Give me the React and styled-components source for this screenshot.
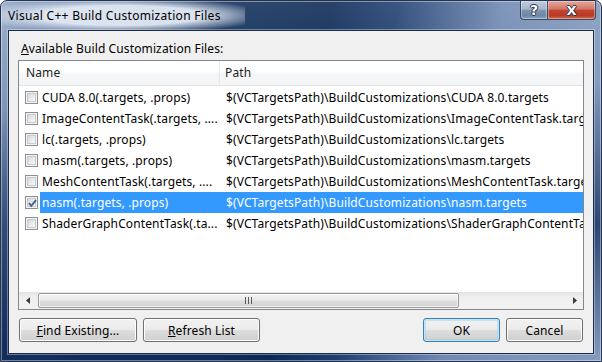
import React from "react";
import styled, { createGlobalStyle } from "styled-components";

const GlobalStyle = createGlobalStyle`
  html, body {
    margin: 0;
    padding: 0;
    background: #ffffff;
  }
  body {
    font-family: "Segoe UI", "Noto Sans", "Liberation Sans", sans-serif;
    font-size: 12px;
    letter-spacing: 0.12px;
  }
`;

const rows = [
  { name: "CUDA 8.0(.targets, .props)", file: "CUDA 8.0.targets" },
  { name: "ImageContentTask(.targets, ....", file: "ImageContentTask.targets" },
  { name: "lc(.targets, .props)", file: "lc.targets" },
  { name: "masm(.targets, .props)", file: "masm.targets" },
  { name: "MeshContentTask(.targets, ....", file: "MeshContentTask.targets" },
  { name: "nasm(.targets, .props)", file: "nasm.targets", checked: true, selected: true },
  { name: "ShaderGraphContentTask(.ta...", file: "ShaderGraphContentTask.targets" },
];

// 창 프레임 (Aero glass)
const Window = styled.div`
  box-sizing: border-box;
  width: 602px;
  height: 362px;
  display: flex;
  flex-direction: column;
  border: 1px solid #22344f;
  border-radius: 7px 7px 0 0;
  overflow: hidden;
  background:
    radial-gradient(ellipse 45% 70% at 0% 100%, rgba(14, 40, 86, 0.95) 0%, rgba(14, 40, 86, 0.6) 55%, rgba(14, 40, 86, 0) 100%),
    radial-gradient(ellipse 30% 40% at 100% 62%, rgba(20, 48, 94, 0.8) 0%, rgba(20, 48, 94, 0) 100%),
    linear-gradient(180deg, rgba(255, 255, 255, 0.12) 0%, rgba(255, 255, 255, 0) 30%),
    linear-gradient(100deg, #93a8c6 0%, #5571a0 10%, #14335f 22%, #0c2956 50%, #1f3f70 60%, #7089b3 76%, #8aa1c3 100%);
  box-shadow: inset 0 0 0 1px rgba(255, 255, 255, 0.4);
`;

const TitleBar = styled.div`
  height: 29px;
  display: flex;
  justify-content: space-between;
  align-items: flex-start;
  flex-shrink: 0;
`;

const TitleText = styled.div`
  margin: 0 0 0 -4px;
  padding: 6px 24px 0 11px;
  height: 23px;
  color: #000;
  font-size: 12px;
  letter-spacing: 0.3px;
  background: radial-gradient(ellipse 60% 62% at 50% 50%, rgba(226, 234, 244, 0.95) 55%, rgba(226, 234, 244, 0) 100%);
`;

const Caption = styled.div`
  display: flex;
  margin-right: 5px;
`;

const CaptionButton = styled.div`
  box-sizing: border-box;
  width: ${(p) => p.$w}px;
  height: 19px;
  display: flex;
  align-items: center;
  justify-content: center;
  border: 1px solid #3b4a63;
  border-top: none;
  border-left-width: ${(p) => (p.$first ? "1px" : "0")};
  border-radius: ${(p) => (p.$first ? "0 0 0 4px" : "0 0 4px 0")};
  background: ${(p) =>
    p.$close
      ? "linear-gradient(180deg, #e3a89d 0%, #d47565 45%, #c3442e 52%, #b83b26 80%, #d86a4c 100%)"
      : "linear-gradient(180deg, #c0cddd 0%, #a5b5cb 45%, #7f93b1 52%, #6f86a8 80%, #8aa2c2 100%)"};
  box-shadow: inset 0 0 0 1px rgba(255, 255, 255, 0.35);
  color: #fff;
  font-family: "DejaVu Sans", sans-serif;
  font-weight: bold;
  font-size: ${(p) => (p.$close ? "13px" : "14px")};
  text-shadow: 0 0 1px #1d2a40, 1px 0 0 #2a3a55, -1px 0 0 #2a3a55, 0 1px 0 #2a3a55, 0 -1px 0 #2a3a55;
`;

const Client = styled.div`
  flex: 1;
  margin: 0 7px 7px 7px;
  display: flex;
  flex-direction: column;
  background: #f0f0f0;
  border: 1px solid #1c2d48;
  box-shadow: 0 0 0 1px rgba(255, 255, 255, 0.35);
`;

const Label = styled.div`
  margin: 10px 0 0 12px;
  height: 16px;
  line-height: 16px;
  color: #000;
`;

const ListBox = styled.div`
  margin: 3px 9px 0 9px;
  height: 250px;
  box-sizing: border-box;
  display: flex;
  flex-direction: column;
  background: #fff;
  border: 1px solid #828790;
  overflow: hidden;
`;

const Header = styled.div`
  height: 24px;
  display: flex;
  flex-shrink: 0;
  border-bottom: 1px solid #e3e4e6;
  background: linear-gradient(180deg, #ffffff 0%, #ffffff 45%, #f6f7f8 50%, #f3f4f6 100%);
`;

const HeaderCell = styled.div`
  box-sizing: border-box;
  width: ${(p) => (p.$w ? `${p.$w}px` : "auto")};
  flex: ${(p) => (p.$w ? "none" : "1")};
  padding-left: ${(p) => p.$pad}px;
  line-height: 24px;
  color: #1e1e1e;
  border-right: ${(p) => (p.$w ? "1px solid #e5e8ec" : "none")};
`;

const Rows = styled.div`
  flex: 1;
  padding-top: 1px;
`;

const Row = styled.div`
  height: 21px;
  display: flex;
  align-items: center;
`;

const CheckSlot = styled.div`
  width: 21px;
  flex-shrink: 0;
  display: flex;
  padding-left: 6px;
  box-sizing: border-box;
`;

const CheckBox = styled.div`
  box-sizing: border-box;
  width: 13px;
  height: 13px;
  border: 1px solid #8f8f8f;
  background: #f4f4f4;
  padding: 1px;
  position: relative;
  span {
    display: block;
    width: 9px;
    height: 9px;
    box-sizing: border-box;
    border: 1px solid #c6c9cd;
    background: linear-gradient(135deg, #d3d6da 0%, #eceded 60%, #fafafa 100%);
  }
  svg {
    position: absolute;
    left: 1px;
    top: 1px;
  }
`;

const RowBody = styled.div`
  flex: 1;
  height: 21px;
  display: flex;
  align-items: center;
  background: ${(p) => (p.$selected ? "#3399ff" : "transparent")};
  color: ${(p) => (p.$selected ? "#fff" : "#000")};
  white-space: nowrap;
  overflow: hidden;
`;

const NameText = styled.div`
  width: 180px;
  flex-shrink: 0;
  padding-left: 2px;
  box-sizing: border-box;
  overflow: hidden;
`;

const PathText = styled.div`
  padding-left: 6px;
  flex: 1;
  overflow: hidden;
`;

const HScroll = styled.div`
  height: 17px;
  flex-shrink: 0;
  display: flex;
  align-items: center;
  background: linear-gradient(180deg, #e3e3e3 0%, #efefef 30%, #f2f2f2 100%);
`;

const Arrow = styled.div`
  width: 17px;
  height: 17px;
  flex-shrink: 0;
  display: flex;
  align-items: center;
  justify-content: center;
`;

const Thumb = styled.div`
  box-sizing: border-box;
  width: 421px;
  height: 15px;
  margin-left: 2px;
  display: flex;
  align-items: center;
  justify-content: center;
  border: 1px solid #9a9a9a;
  border-radius: 2px;
  background: linear-gradient(180deg, #f4f4f4 0%, #e9e9e9 45%, #dcdcdc 55%, #d3d3d3 100%);
  box-shadow: inset 0 0 0 1px rgba(255, 255, 255, 0.7);
`;

const Track = styled.div`
  flex: 1;
`;

const ButtonRow = styled.div`
  display: flex;
  align-items: center;
  gap: 6px;
  margin: 8px 10px 0 10px;
`;

const Spacer = styled.div`
  flex: 1;
`;

const Button = styled.button`
  box-sizing: border-box;
  width: ${(p) => p.$w}px;
  height: 24px;
  padding: 0;
  border: 1px solid ${(p) => (p.$default ? "#3c7fb1" : "#707070")};
  border-radius: 3px;
  background: linear-gradient(180deg, #f2f2f2 0%, #ebebeb 48%, #dddddd 52%, #cfcfcf 100%);
  box-shadow: ${(p) =>
    p.$default
      ? "inset 0 0 0 1px #c4e5f6, inset 0 0 0 2px rgba(120, 200, 240, 0.35)"
      : "inset 0 0 0 1px #fcfcfc"};
  font-family: inherit;
  font-size: 12px;
  letter-spacing: 0.12px;
  color: #000;
`;

const CheckMark = () => (
  <svg width="11" height="11" viewBox="0 0 11 11">
    <path d="M2 5.2 L4.3 7.8 L9 2.2" fill="none" stroke="#3d5d95" strokeWidth="1.8" />
  </svg>
);

const App = () => {
  return (
    <React.Fragment>
      <GlobalStyle />
      <Window>
        <TitleBar>
          <TitleText>Visual C++ Build Customization Files</TitleText>
          <Caption>
            <CaptionButton $w={28} $first>?</CaptionButton>
            <CaptionButton $w={48} $close>X</CaptionButton>
          </Caption>
        </TitleBar>
        <Client>
          <Label>
            <u>A</u>vailable Build Customization Files:
          </Label>
          <ListBox>
            <Header>
              <HeaderCell $w={201} $pad={7}>Name</HeaderCell>
              <HeaderCell $pad={5}>Path</HeaderCell>
            </Header>
            <Rows>
              {rows.map((r) => (
                <Row key={r.name}>
                  <CheckSlot>
                    <CheckBox>
                      <span />
                      {r.checked ? <CheckMark /> : null}
                    </CheckBox>
                  </CheckSlot>
                  <RowBody $selected={r.selected}>
                    <NameText>{r.name}</NameText>
                    <PathText>{"$(VCTargetsPath)\\BuildCustomizations\\" + r.file}</PathText>
                  </RowBody>
                </Row>
              ))}
            </Rows>
            <HScroll>
              <Arrow>
                <svg width="4" height="7" viewBox="0 0 4 7">
                  <path d="M4 0 L0 3.5 L4 7 Z" fill="#3a3a3a" />
                </svg>
              </Arrow>
              <Thumb>
                <svg width="7" height="7" viewBox="0 0 7 7">
                  <path d="M0.5 0 V7 M3.5 0 V7 M6.5 0 V7" stroke="#5a5a5a" strokeWidth="1" />
                </svg>
              </Thumb>
              <Track />
              <Arrow>
                <svg width="4" height="7" viewBox="0 0 4 7">
                  <path d="M0 0 L4 3.5 L0 7 Z" fill="#3a3a3a" />
                </svg>
              </Arrow>
            </HScroll>
          </ListBox>
          <ButtonRow>
            <Button $w={118}>
              <u>F</u>ind Existing...
            </Button>
            <Button $w={117}>
              <u>R</u>efresh List
            </Button>
            <Spacer />
            <Button $w={77} $default>OK</Button>
            <Button $w={77}>Cancel</Button>
          </ButtonRow>
        </Client>
      </Window>
    </React.Fragment>
  );
};

export default App;
